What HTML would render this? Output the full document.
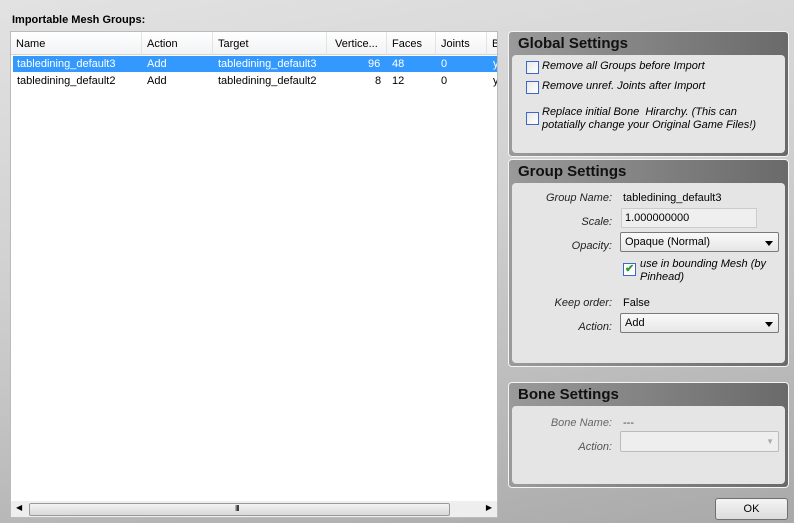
<!DOCTYPE html>
<html><head><style>
*{box-sizing:border-box;margin:0;padding:0}
body{width:794px;height:523px;overflow:hidden;font-family:"Liberation Sans",sans-serif;font-size:11px;color:#000;
background:linear-gradient(170deg,#e2e2e2 0%,#cfcfcf 45%,#a9a9a9 100%);position:relative}
.abs{position:absolute}
.title{left:12px;top:14px;font-weight:bold;font-size:11px}
.table{left:10px;top:31px;width:488px;height:487px;background:#fff;border:1px solid #bbb;overflow:hidden}
.hdr{position:absolute;top:0;left:0;width:100%;height:23px;background:linear-gradient(#fff,#f2f3f5);border-bottom:1px solid #d5d5d5}
.hdr span{position:absolute;top:6px;height:23px}
.sep{position:absolute;top:0;width:1px;height:23px;background:#e3e3e3}
.row{position:absolute;left:2px;width:484px;height:16px}
.row span{position:absolute;top:2px}
.sel{background:#3399ff;color:#fff}
.sb{position:absolute;left:0;bottom:0;width:100%;height:16px;background:#eee}
.thumb{position:absolute;left:18px;top:2px;width:421px;height:13px;border:1px solid #999;border-radius:2px;background:linear-gradient(#f3f3f3,#d8d8d8)}
.panel{position:absolute;left:508px;width:281px;border:1px solid #f4f4f4;border-radius:4px;background:linear-gradient(90deg,#9a9a9a,#6a6a6a)}
.panel h2{font-size:15px;font-weight:bold;padding:3px 9px;height:22px;color:#111}
.inner{position:absolute;left:3px;right:3px;top:23px;bottom:3px;background:#e5e5e5;border-radius:4px}
.cb{position:absolute;width:13px;height:13px;border:1px solid #3f67c9;background:linear-gradient(135deg,#e9e9e9,#fff)}
.it{font-style:italic;position:absolute}
.lab{font-style:italic;position:absolute;text-align:right;width:100px;color:#222}
.dd{position:absolute;height:20px;border:1px solid #7a7a7a;border-radius:2px;background:linear-gradient(#fafafa,#e6e6e6);padding:3px 4px}
.dd:after{content:"";position:absolute;right:5px;top:8px;border:4px solid transparent;border-top:5px solid #000}
</style></head><body>
<div class="abs title">Importable Mesh Groups:</div>
<div class="abs table">
 <div class="hdr">
  <span style="left:5px">Name</span><div class="sep" style="left:130px"></div>
  <span style="left:136px">Action</span><div class="sep" style="left:201px"></div>
  <span style="left:207px">Target</span><div class="sep" style="left:315px"></div>
  <span style="left:324px">Vertice...</span><div class="sep" style="left:375px"></div>
  <span style="left:381px">Faces</span><div class="sep" style="left:424px"></div>
  <span style="left:430px">Joints</span><div class="sep" style="left:475px"></div>
  <span style="left:481px">B</span>
 </div>
 <div class="row sel" style="top:24px"><span style="left:4px">tabledining_default3</span><span style="left:134px">Add</span><span style="left:205px">tabledining_default3</span><span style="left:355px">96</span><span style="left:379px">48</span><span style="left:428px">0</span><span style="left:480px">y</span></div>
 <div class="row" style="top:41px"><span style="left:4px">tabledining_default2</span><span style="left:134px">Add</span><span style="left:205px">tabledining_default2</span><span style="left:362px">8</span><span style="left:379px">12</span><span style="left:428px">0</span><span style="left:480px">y</span></div>
 <div class="sb"><span style="position:absolute;left:5px;top:2px;font-size:8px">◀</span><div class="thumb"><span style="position:absolute;left:205px;top:0;font-size:8px;letter-spacing:-1px">III</span></div><span style="position:absolute;right:5px;top:2px;font-size:8px">▶</span></div>
</div>

<div class="panel" style="top:31px;height:126px"><h2>Global Settings</h2><div class="inner">
 <div class="cb" style="left:14px;top:6px"></div><div class="it" style="left:30px;top:5px">Remove all Groups before Import</div>
 <div class="cb" style="left:14px;top:26px"></div><div class="it" style="left:30px;top:25px">Remove unref. Joints after Import</div>
 <div class="cb" style="left:14px;top:57px"></div><div class="it" style="left:30px;top:51px;line-height:13px">Replace initial Bone&nbsp; Hirarchy. (This can<br>potatially change your Original Game Files!)</div>
</div></div>

<div class="panel" style="top:159px;height:208px"><h2>Group Settings</h2><div class="inner">
 <div class="lab" style="left:0;top:9px">Group Name:</div><div class="abs" style="left:111px;top:9px">tabledining_default3</div>
 <div class="lab" style="left:0;top:33px">Scale:</div><div class="abs" style="left:109px;top:25px;width:136px;height:20px;background:#efefef;border:1px solid #ccc;padding:3px 3px">1.000000000</div>
 <div class="lab" style="left:0;top:57px">Opacity:</div><div class="dd" style="left:108px;top:49px;width:159px">Opaque (Normal)</div>
 <div class="cb" style="left:111px;top:80px;background:#fff"><span style="position:absolute;left:1px;top:-2px;color:#2a9d2a;font-size:11px;font-weight:bold">✔</span></div>
 <div class="it" style="left:128px;top:75px;line-height:13px">use in bounding Mesh (by<br>Pinhead)</div>
 <div class="lab" style="left:0;top:114px">Keep order:</div><div class="abs" style="left:111px;top:114px">False</div>
 <div class="lab" style="left:0;top:138px">Action:</div><div class="dd" style="left:108px;top:130px;width:159px">Add</div>
</div></div>

<div class="panel" style="top:382px;height:106px"><h2>Bone Settings</h2><div class="inner">
 <div class="lab" style="left:0;top:11px;color:#666">Bone Name:</div><div class="abs" style="left:111px;top:11px;color:#444">---</div>
 <div class="lab" style="left:0;top:35px;color:#555">Action:</div><div class="abs" style="left:108px;top:25px;width:159px;height:21px;border:1px solid #bbb;border-radius:2px;background:#eee"><span style="position:absolute;right:4px;top:5px;color:#aaa;font-size:8px">▼</span></div>
</div></div>

<div class="abs" style="left:715px;top:498px;width:73px;height:22px;border:1px solid #707070;border-radius:3px;background:linear-gradient(#f4f4f4,#dcdcdc);text-align:center;padding-top:4px">OK</div>
</body></html>
